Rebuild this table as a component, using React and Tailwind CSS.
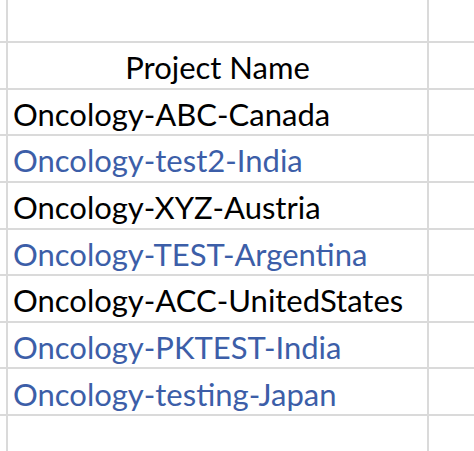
const rows = [
  { text: "Oncology-ABC-Canada", blue: false },
  { text: "Oncology-test2-India", blue: true },
  { text: "Oncology-XYZ-Austria", blue: false },
  { text: "Oncology-TEST-Argentina", blue: true },
  { text: "Oncology-ACC-UnitedStates", blue: false },
  { text: "Oncology-PKTEST-India", blue: true },
  { text: "Oncology-testing-Japan", blue: true },
];

function Row({ children, first, center, blue }) {
  return (
    <div
      className={`flex ${first ? "h-[41px]" : "h-[46.625px] border-t-2"} border-[#dadada]`}
    >
      <div className="w-[6px] shrink-0" />
      <div
        className={`w-[421px] shrink-0 border-l-2 border-[#dadada] flex items-end pb-[4.5px] leading-none whitespace-nowrap ${
          center ? "justify-center" : "pl-[5px]"
        } ${blue ? "text-[#3c5ea8]" : "text-black"}`}
      >
        {children}
      </div>
      <div className="flex-1 border-l-2 border-[#dadada]" />
    </div>
  );
}

export default function App() {
  return (
    <div
      className="w-[474px] h-[451px] overflow-hidden bg-white text-[31px]"
      style={{ fontFamily: "Lato, 'Liberation Sans', sans-serif" }}
    >
      <Row first />
      <Row center>Project Name</Row>
      {rows.map((r) => (
        <Row key={r.text} blue={r.blue}>
          {r.text}
        </Row>
      ))}
      <Row />
    </div>
  );
}
